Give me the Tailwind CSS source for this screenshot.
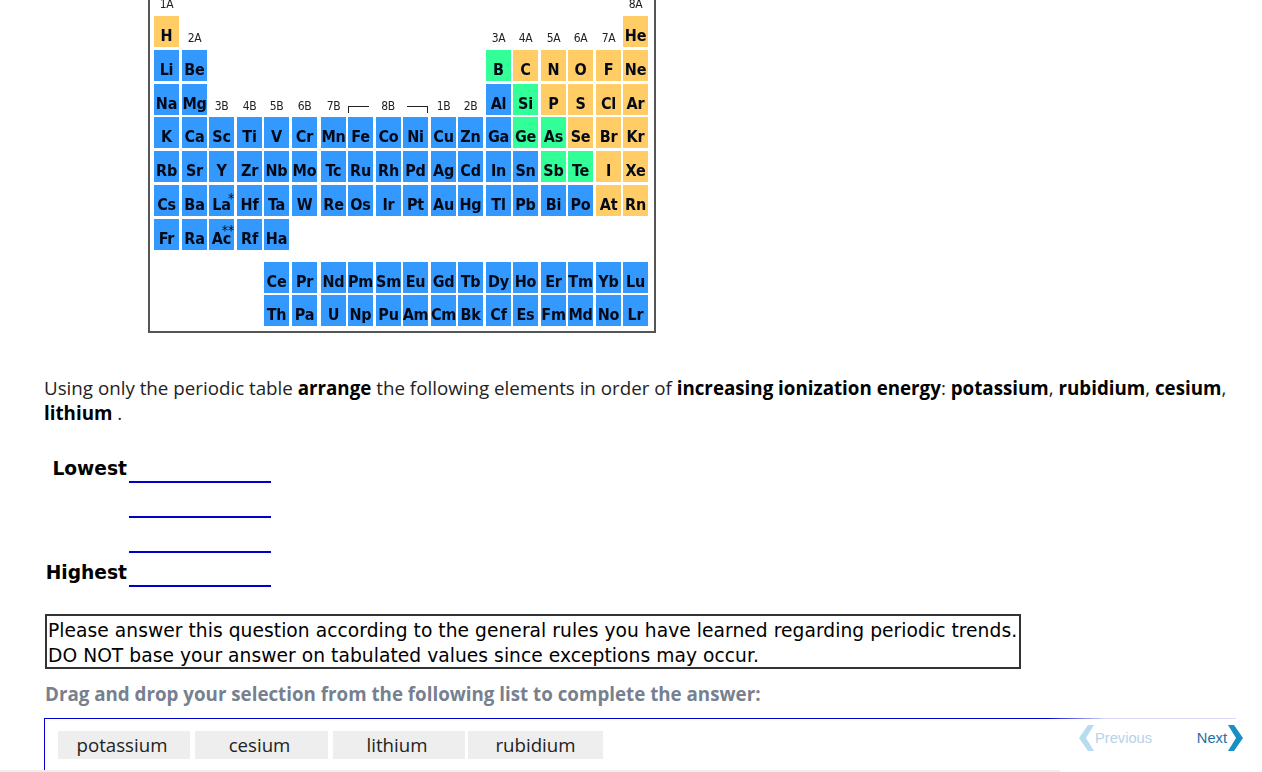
<!DOCTYPE html>
<html lang="en">
<head>
<meta charset="UTF-8" />
<title>Periodic trends question</title>
<script src="https://cdn.jsdelivr.net/npm/@tailwindcss/browser@4"></script>
</head>
<body class="bg-white overflow-hidden h-[772px] relative font-['Open_Sans',sans-serif] text-black">
    <!-- periodic table picture -->
    <div class="ml-[148px] -mt-[10px] w-[508px] h-[343px] border-2 border-[#555] pl-[4px] pt-[4px] font-['DejaVu_Sans',sans-serif] [font-stretch:condensed] font-bold text-[16px] tracking-[-0.2px] text-[#050a18] blur-[0.3px]">
        <div class="grid grid-cols-[28px_27px_28px_27px_28px_29px_27px_28px_27px_28px_27px_28px_27px_28px_27px_28px_27px_28px] grid-rows-[20px_34px_34px_33px_34px_34px_34px_43px_33px_33px] [&>div]:w-[25px] [&>div]:h-[31px] [&>div]:flex [&>div]:items-center [&>div]:justify-center [&>div]:pt-[8px] [&>.b]:bg-[#3399ff] [&>.o]:bg-[#ffcc66] [&>.g]:bg-[#33ff99] [&>.l]:bg-transparent [&>.l]:pt-0 [&>.l]:font-normal [&>.l]:text-[12px] [&>.l]:items-end [&>.l]:tracking-[-0.3px] [&>.l]:text-[#222]">
            <!-- row 0 labels -->
            <div class="l col-start-1 !h-[17px]">1A</div>
            <div class="l col-start-18 !h-[17px]">8A</div>

            <!-- row 1 -->
            <div class="o col-start-1">H</div>
            <div class="l col-start-2">2A</div>
            <div class="l col-start-13">3A</div>
            <div class="l col-start-14">4A</div>
            <div class="l col-start-15">5A</div>
            <div class="l col-start-16">6A</div>
            <div class="l col-start-17">7A</div>
            <div class="o col-start-18">He</div>

            <!-- row 2 -->
            <div class="b col-start-1">Li</div>
            <div class="b col-start-2">Be</div>
            <div class="g col-start-13">B</div>
            <div class="o col-start-14">C</div>
            <div class="o col-start-15">N</div>
            <div class="o col-start-16">O</div>
            <div class="o col-start-17">F</div>
            <div class="o col-start-18">Ne</div>

            <!-- row 3 -->
            <div class="b col-start-1">Na</div>
            <div class="b col-start-2">Mg</div>
            <div class="l col-start-3">3B</div>
            <div class="l col-start-4">4B</div>
            <div class="l col-start-5">5B</div>
            <div class="l col-start-6">6B</div>
            <div class="l col-start-7">7B</div>
            <div class="l col-start-8 col-end-11 !w-[80px] !justify-between">
                <span class="w-[21px] h-[7px] border-t border-l border-[#222] mb-[2px]"></span>
                <span>8B</span>
                <span class="w-[21px] h-[7px] border-t border-r border-[#222] mb-[2px]"></span>
            </div>
            <div class="l col-start-11">1B</div>
            <div class="l col-start-12">2B</div>
            <div class="b col-start-13">Al</div>
            <div class="g col-start-14">Si</div>
            <div class="o col-start-15">P</div>
            <div class="o col-start-16">S</div>
            <div class="o col-start-17">Cl</div>
            <div class="o col-start-18">Ar</div>

            <!-- row 4 -->
            <div class="b col-start-1">K</div><div class="b">Ca</div><div class="b">Sc</div><div class="b">Ti</div><div class="b">V</div><div class="b">Cr</div><div class="b">Mn</div><div class="b">Fe</div><div class="b">Co</div>
            <div class="b">Ni</div><div class="b">Cu</div><div class="b">Zn</div><div class="b">Ga</div><div class="g">Ge</div><div class="g">As</div><div class="o">Se</div><div class="o">Br</div><div class="o">Kr</div>

            <!-- row 5 -->
            <div class="b col-start-1">Rb</div><div class="b">Sr</div><div class="b">Y</div><div class="b">Zr</div><div class="b">Nb</div><div class="b">Mo</div><div class="b">Tc</div><div class="b">Ru</div><div class="b">Rh</div>
            <div class="b">Pd</div><div class="b">Ag</div><div class="b">Cd</div><div class="b">In</div><div class="b">Sn</div><div class="g">Sb</div><div class="g">Te</div><div class="o">I</div><div class="o">Xe</div>

            <!-- row 6 -->
            <div class="b col-start-1">Cs</div><div class="b">Ba</div>
            <div class="b relative">La<span class="absolute right-0 top-[6px] font-normal text-[14px] leading-[14px]">*</span></div>
            <div class="b">Hf</div><div class="b">Ta</div><div class="b">W</div><div class="b">Re</div><div class="b">Os</div><div class="b">Ir</div>
            <div class="b">Pt</div><div class="b">Au</div><div class="b">Hg</div><div class="b">Tl</div><div class="b">Pb</div><div class="b">Bi</div><div class="b">Po</div><div class="o">At</div><div class="o">Rn</div>

            <!-- row 7 -->
            <div class="b col-start-1">Fr</div><div class="b">Ra</div>
            <div class="b relative">Ac<span class="absolute right-0 top-[4px] font-normal text-[14px] leading-[14px]">**</span></div>
            <div class="b">Rf</div><div class="b">Ha</div>

            <!-- lanthanides -->
            <div class="b col-start-5">Ce</div><div class="b">Pr</div><div class="b">Nd</div><div class="b">Pm</div><div class="b">Sm</div><div class="b">Eu</div><div class="b">Gd</div><div class="b">Tb</div><div class="b">Dy</div><div class="b">Ho</div><div class="b">Er</div><div class="b">Tm</div><div class="b">Yb</div><div class="b">Lu</div>

            <!-- actinides -->
            <div class="b col-start-5">Th</div><div class="b">Pa</div><div class="b">U</div><div class="b">Np</div><div class="b">Pu</div><div class="b">Am</div><div class="b">Cm</div><div class="b">Bk</div><div class="b">Cf</div><div class="b">Es</div><div class="b">Fm</div><div class="b">Md</div><div class="b">No</div><div class="b">Lr</div>
        </div>
    </div>

    <!-- question -->
    <p class="ml-[44px] mt-[42px] w-[1200px] text-[18.75px] leading-[25px] text-[#222]">
        Using only the periodic table <b class="text-black">arrange</b> the following elements in order of <b class="text-black">increasing ionization energy</b>: <b class="text-black">potassium</b>, <b class="text-black">rubidium</b>, <b class="text-black">cesium</b>, <b class="text-black">lithium</b> .
    </p>

    <!-- answer blanks -->
    <div class="ml-[44px] mt-[23px] w-[227px] font-['DejaVu_Sans',sans-serif] font-bold text-[18.67px] grid grid-cols-[83px_142px] gap-x-[2px] auto-rows-[35px] text-right">
        <div class="flex items-end justify-end">Lowest</div>
        <div class="border-b-2 border-[#0000cc]"></div>
        <div></div>
        <div class="border-b-2 border-[#0000cc]"></div>
        <div></div>
        <div class="border-b-2 border-[#0000cc]"></div>
        <div class="flex items-end justify-end pb-[1px]">Highest</div>
        <div class="border-b-2 border-[#0000cc] mb-[1px]"></div>
    </div>

    <!-- note -->
    <div class="ml-[45px] mt-[26px] w-[976px] h-[55px] border-2 border-[#333] pl-[1px] pt-[2px] font-['DejaVu_Sans',sans-serif] text-[18.67px] leading-[25px] tracking-[0.05px] text-black">
        <p class="whitespace-nowrap">Please answer this question according to the general rules you have learned regarding periodic trends.</p>
        <p class="whitespace-nowrap">DO NOT base your answer on tabulated values since exceptions may occur.</p>
    </div>

    <p class="ml-[45px] mt-[11px] text-[18.75px] leading-[27px] font-bold text-[#76808f]">Drag and drop your selection from the following list to complete the answer:</p>

    <!-- drag source list -->
    <div class="absolute left-[44px] top-[718px] w-[1192px] h-[52px] border-l border-t border-transparent [border-image:linear-gradient(90deg,#0000cc_0%,#0000cc_84%,#d8d8f8_89%,#d8d8f8_100%)_1]">
        <div class="flex gap-[5px] pl-[13px] pt-[12px] text-[18.67px] text-[#222] [&>span]:h-[28px] [&>span]:bg-[#eeeeee] [&>span]:flex [&>span]:items-center [&>span]:justify-center">
            <span class="w-[132px] pr-[4px]">potassium</span>
            <span class="w-[133px] pr-[4px]">cesium</span>
            <span class="w-[132px] pr-[4px]">lithium</span>
            <span class="w-[135px] -ml-[2px]">rubidium</span>
        </div>
    </div>

    <!-- bottom scrollbar edge -->
    <div class="absolute left-0 bottom-0 w-[1060px] h-[2px] bg-[#eeeeee]"></div>

    <!-- prev / next -->
    <div class="absolute left-[1078px] top-[724px] w-[166px] h-[28px] flex items-center justify-between font-['Liberation_Sans',sans-serif] text-[14.67px]">
        <div class="flex items-center text-[#b5d3e8]">
            <svg width="17" height="28" viewBox="0 0 17 28"><path d="M16 1h-6L1 14l9 13h6L8 14z" fill="#b8dcef" /></svg>
            <span>Previous</span>
        </div>
        <div class="flex items-center text-[#1c6ea4]">
            <span>Next</span>
            <svg width="17" height="28" viewBox="0 0 17 28"><path d="M1 1h6l9 13-9 13H1l8-13z" fill="#1a8fc4" /></svg>
        </div>
    </div>
</body>
</html>
